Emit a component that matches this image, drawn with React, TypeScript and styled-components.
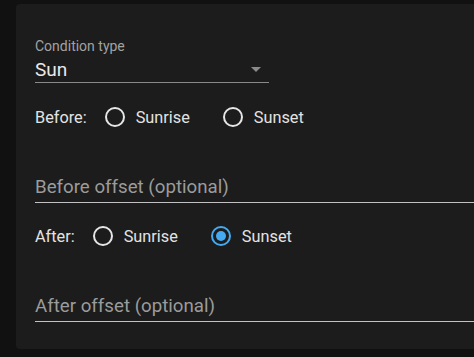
import React from 'react'
import styled, { createGlobalStyle } from 'styled-components'

const GlobalStyle = createGlobalStyle`
  html, body {
    margin: 0;
    padding: 0;
    background: #111111;
    overflow: hidden;
  }
  body {
    font-family: Roboto, "Noto Sans", "Liberation Sans", sans-serif;
    -webkit-font-smoothing: antialiased;
  }
`

const Card = styled.div`
  margin: 4px -20px 0 16px;
  padding: 35px 0 27px 19px;
  background: #1c1c1c;
  border-radius: 4px;
  display: flex;
  flex-direction: column;
`

const SelectField = styled.div`
  width: 234px;
  display: flex;
  flex-direction: column;
  border-bottom: 1px solid #8a8a8a;
  position: relative;
`

const FloatLabel = styled.div`
  font-size: 14px;
  line-height: 14px;
  color: #a2a2a2;
`

const SelectValue = styled.div`
  margin-top: 5px;
  font-size: 19px;
  line-height: 24px;
  color: #e9e9e9;
`

const Arrow = styled.div`
  position: absolute;
  right: 8px;
  bottom: 10px;
  width: 0;
  height: 0;
  border-left: 5px solid transparent;
  border-right: 5px solid transparent;
  border-top: 5px solid #8a8a8a;
`

const RadioRow = styled.div<{ $top: number }>`
  margin-top: ${({ $top }) => $top}px;
  height: 40px;
  display: flex;
  align-items: center;
  font-size: 16.3px;
  color: #e3e3e3;
`

const RowLabel = styled.span`
  margin-right: 18px;
`

const Option = styled.label`
  display: flex;
  align-items: center;
  margin-right: 33px;
`

const Circle = styled.span<{ $checked?: boolean }>`
  width: 20px;
  height: 20px;
  box-sizing: border-box;
  border-radius: 50%;
  border: 2px solid ${({ $checked }) => ($checked ? '#45aaf0' : '#e6e6e6')};
  display: flex;
  align-items: center;
  justify-content: center;
  margin-right: 11px;
  &::after {
    content: '';
    width: 10px;
    height: 10px;
    border-radius: 50%;
    background: #45aaf0;
    display: ${({ $checked }) => ($checked ? 'block' : 'none')};
  }
`

const TextField = styled.div`
  height: 66px;
  display: flex;
  align-items: flex-end;
  padding-bottom: 3px;
  box-sizing: border-box;
  border-bottom: 1px solid #c2c2c2;
`

const Placeholder = styled.div`
  font-size: 18.7px;
  line-height: 24px;
  color: #9b9b9b;
`

const Radio = ({ label, checked }: { label: string; checked?: boolean }) => (
  <Option>
    <Circle $checked={checked} />
    {label}
  </Option>
)

const App = () => {
  return (
    <>
      <GlobalStyle />
      <Card>
        <SelectField>
          <FloatLabel>Condition type</FloatLabel>
          <SelectValue>Sun</SelectValue>
          <Arrow />
        </SelectField>
        <RadioRow $top={14}>
          <RowLabel>Before:</RowLabel>
          <Radio label="Sunrise" />
          <Radio label="Sunset" />
        </RadioRow>
        <TextField>
          <Placeholder>Before offset (optional)</Placeholder>
        </TextField>
        <RadioRow $top={13}>
          <RowLabel>After:</RowLabel>
          <Radio label="Sunrise" />
          <Radio label="Sunset" checked />
        </RadioRow>
        <TextField>
          <Placeholder>After offset (optional)</Placeholder>
        </TextField>
      </Card>
    </>
  )
}

export default App
